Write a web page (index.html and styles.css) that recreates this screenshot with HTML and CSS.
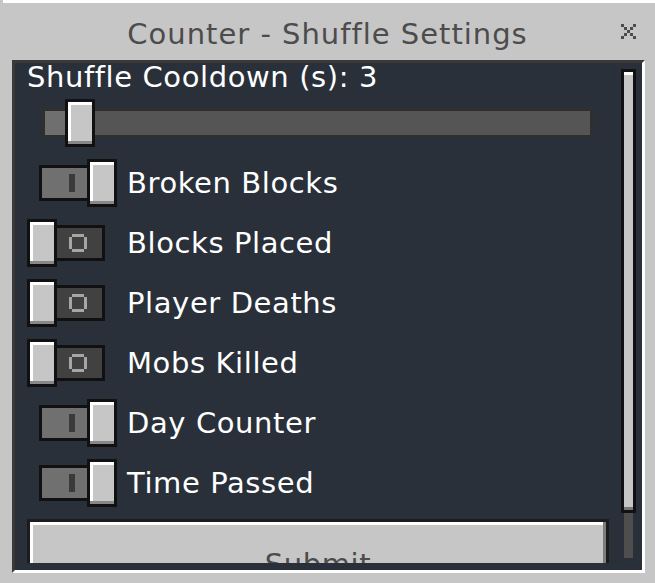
FILE: index.html
```html
<!DOCTYPE html>
<html lang="en">
<head>
<meta charset="utf-8">
<title>Counter - Shuffle Settings</title>
<link rel="stylesheet" href="styles.css">
</head>
<body>
<div class="screen">
  <div class="top-edge"></div>
  <header class="titlebar">
    <span class="spacer"></span>
    <h1 class="title">Counter - Shuffle Settings</h1>
    <button class="close" aria-label="Close">
      <svg width="15" height="15" viewBox="0 0 5 5" shape-rendering="crispEdges"><path fill="#4c4c4c" d="M0 0h1v1H0zM4 0h1v1H4zM1 1h1v1H1zM3 1h1v1H3zM2 2h1v1H2zM1 3h1v1H1zM3 3h1v1H3zM0 4h1v1H0zM4 4h1v1H4z"/></svg>
    </button>
  </header>
  <section class="panel">
    <div class="viewport">
      <div class="content">
        <div class="field-label">Shuffle Cooldown (s): 3</div>
        <div class="slider">
          <div class="slider-track">
            <div class="slider-fill"></div>
            <div class="knob"></div>
          </div>
        </div>

        <div class="toggle-row">
          <div class="toggle-cell on"><div class="track"><span class="mark-on"></span></div><div class="knob"></div></div>
          <span class="toggle-label">Broken Blocks</span>
        </div>
        <div class="toggle-row">
          <div class="toggle-cell off"><div class="knob"></div><div class="track"><svg class="mark-off" width="18" height="18" viewBox="0 0 6 6" shape-rendering="crispEdges"><path fill="#a6a6a6" d="M1 0h4v1H1zM1 5h4v1H1zM0 1h1v4H0zM5 1h1v4H5z"/></svg></div></div>
          <span class="toggle-label">Blocks Placed</span>
        </div>
        <div class="toggle-row">
          <div class="toggle-cell off"><div class="knob"></div><div class="track"><svg class="mark-off" width="18" height="18" viewBox="0 0 6 6" shape-rendering="crispEdges"><path fill="#a6a6a6" d="M1 0h4v1H1zM1 5h4v1H1zM0 1h1v4H0zM5 1h1v4H5z"/></svg></div></div>
          <span class="toggle-label">Player Deaths</span>
        </div>
        <div class="toggle-row">
          <div class="toggle-cell off"><div class="knob"></div><div class="track"><svg class="mark-off" width="18" height="18" viewBox="0 0 6 6" shape-rendering="crispEdges"><path fill="#a6a6a6" d="M1 0h4v1H1zM1 5h4v1H1zM0 1h1v4H0zM5 1h1v4H5z"/></svg></div></div>
          <span class="toggle-label">Mobs Killed</span>
        </div>
        <div class="toggle-row">
          <div class="toggle-cell on"><div class="track"><span class="mark-on"></span></div><div class="knob"></div></div>
          <span class="toggle-label">Day Counter</span>
        </div>
        <div class="toggle-row">
          <div class="toggle-cell on"><div class="track"><span class="mark-on"></span></div><div class="knob"></div></div>
          <span class="toggle-label">Time Passed</span>
        </div>

        <button class="submit">Submit</button>
      </div>
    </div>
    <div class="scrollbar">
      <div class="sb-thumb"></div>
      <div class="sb-track"></div>
    </div>
  </section>
</div>
</body>
</html>
```

FILE: styles.css
```css
* { box-sizing: border-box; }

html, body {
  margin: 0;
  padding: 0;
  background: #c6c6c6;
}

body {
  font-family: "DejaVu Sans", "Liberation Sans", sans-serif;
  font-size: 29px;
  line-height: 28px;
  letter-spacing: 0.6px;
  color: #ffffff;
  width: 655px;
  height: 583px;
  overflow: hidden;
}

.screen {
  display: flex;
  flex-direction: column;
  width: 655px;
  height: 583px;
}

.top-edge {
  height: 3px;
  margin-left: 3px;
  background: #ffffff;
}

.titlebar {
  height: 57px;
  display: grid;
  grid-template-columns: 1fr auto 1fr;
  align-items: start;
}

.title {
  margin: 17px 0 0 0;
  font-size: 29px;
  font-weight: normal;
  line-height: 28px;
  letter-spacing: 1px;
  color: #4c4c4c;
  white-space: nowrap;
}

.close {
  justify-self: end;
  margin: 21px 19px 0 0;
  padding: 0;
  border: 0;
  background: none;
  width: 15px;
  height: 15px;
  display: flex;
}

.panel {
  display: flex;
  align-items: flex-start;
  margin-left: 12px;
  width: 633px;
  height: 513px;
  background: #29303a;
  border-style: solid;
  border-width: 3px;
  border-color: #3a3a3a #ffffff #ffffff #3a3a3a;
}

.viewport {
  flex: 1;
  height: 500px;
  overflow: hidden;
  padding-left: 12px;
  padding-right: 12px;
}

.content {
  width: 582px;
  display: flex;
  flex-direction: column;
}

.field-label {
  white-space: nowrap;
  line-height: 34px;
  margin-top: -3px;
}

.slider {
  margin-top: 5px;
  margin-left: 15px;
  margin-right: 16px;
  height: 48px;
  display: flex;
  align-items: center;
}

.slider-track {
  flex: 1;
  height: 30px;
  border: 3px solid #2f2f2f;
  background: #555555;
  display: flex;
  align-items: center;
}

.slider-fill {
  width: 20px;
  align-self: stretch;
  background: #6f6f6f;
}

.knob {
  flex-shrink: 0;
  width: 30px;
  height: 48px;
  border: 3px solid #111111;
  background: #c6c6c6;
  box-shadow: inset 0 -3px 0 #888888, inset 3px 3px 0 #ffffff;
  z-index: 1;
}

.toggle-row {
  margin-top: 12px;
  height: 48px;
  display: flex;
  align-items: center;
}

.toggle-cell {
  width: 100px;
  height: 48px;
  display: flex;
  align-items: center;
  flex-shrink: 0;
}

.toggle-cell.on { padding-left: 12px; }

.track {
  width: 52px;
  height: 36px;
  border: 3px solid #111111;
  display: flex;
  align-items: center;
  flex-shrink: 0;
}

.toggle-cell.on .track {
  background: #707070;
  padding-left: 27px;
}

.toggle-cell.on .knob { margin-left: -4px; }

.toggle-cell.off .track {
  background: #414141;
  padding-left: 13px;
  margin-left: -4px;
}

.mark-on {
  display: block;
  width: 6px;
  height: 18px;
  background: #3a3a3a;
}

.mark-off { display: block; }

.toggle-label {
  white-space: nowrap;
  line-height: 34px;
}

.submit {
  margin-top: 12px;
  width: 582px;
  height: 90px;
  flex-shrink: 0;
  padding: 0;
  border: 3px solid #1c1c1c;
  background: #c6c6c6;
  box-shadow: inset -3px 0 0 #7c7c7c, inset 3px 3px 0 #ffffff;
  font-family: inherit;
  font-size: 29px;
  line-height: 28px;
  letter-spacing: 0.6px;
  color: #4c4c4c;
}

.scrollbar {
  width: 15px;
  height: 489px;
  margin-top: 6px;
  margin-right: 6px;
  display: flex;
  flex-direction: column;
}

.sb-thumb {
  height: 444px;
  border: 3px solid #111111;
  background: #c6c6c6;
  box-shadow: inset 0 3px 0 #ffffff, inset 0 -3px 0 #777777;
}

.sb-track {
  flex: 1;
  margin: 0 3px;
  background: #4e4e4e;
}
```
